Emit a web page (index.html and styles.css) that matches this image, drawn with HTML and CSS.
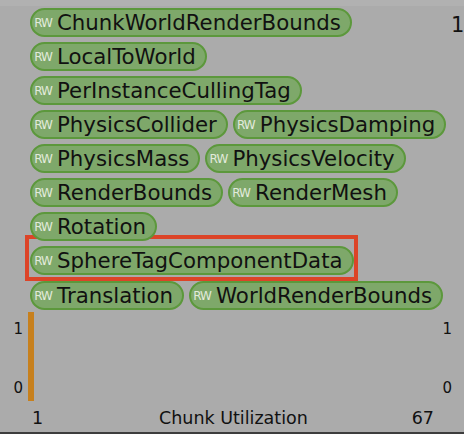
FILE: index.html
```html
<!DOCTYPE html>
<html lang="en">
<head>
  <meta charset="UTF-8" />
  <title>Chunk Components</title>
  <link rel="stylesheet" href="styles.css">
</head>
<body>

  <div class="top-strip"></div>

  <!-- Component list -->
  <div class="archetype">
    <div class="components">
      <div class="row">
        <span class="comp"><span class="rw">RW</span>ChunkWorldRenderBounds</span>
      </div>
      <div class="row">
        <span class="comp"><span class="rw">RW</span>LocalToWorld</span>
      </div>
      <div class="row">
        <span class="comp"><span class="rw">RW</span>PerInstanceCullingTag</span>
      </div>
      <div class="row">
        <span class="comp"><span class="rw">RW</span>PhysicsCollider</span>
        <span class="comp"><span class="rw">RW</span>PhysicsDamping</span>
      </div>
      <div class="row">
        <span class="comp"><span class="rw">RW</span>PhysicsMass</span>
        <span class="comp"><span class="rw">RW</span>PhysicsVelocity</span>
      </div>
      <div class="row">
        <span class="comp"><span class="rw">RW</span>RenderBounds</span>
        <span class="comp"><span class="rw">RW</span>RenderMesh</span>
      </div>
      <div class="row">
        <span class="comp"><span class="rw">RW</span>Rotation</span>
      </div>
      <div class="row selected">
        <span class="comp"><span class="rw">RW</span>SphereTagComponentData</span>
      </div>
      <div class="row">
        <span class="comp"><span class="rw">RW</span>Translation</span>
        <span class="comp"><span class="rw">RW</span>WorldRenderBounds</span>
      </div>
    </div>
    <div class="count">1</div>
  </div>

  <!-- Chunk utilization histogram -->
  <div class="chart">
    <div class="axis-y">
      <span>1</span>
      <span>0</span>
    </div>
    <div class="plot">
      <div class="bar" style="height: 100%"></div>
    </div>
    <div class="axis-y">
      <span>1</span>
      <span>0</span>
    </div>
  </div>
  <div class="axis-x">
    <span>1</span>
    <span class="axis-title">Chunk Utilization</span>
    <span>67</span>
  </div>

  <div class="bottom-strip"></div>

</body>
</html>
```

FILE: styles.css
```css
* {
  box-sizing: border-box;
  margin: 0;
  padding: 0;
}

body {
  position: relative;
  width: 464px;
  height: 434px;
  overflow: hidden;
  background: #ababab;
  color: #111;
  font-family: "DejaVu Sans", Verdana, sans-serif;
}

.top-strip {
  height: 6px;
  background: #b1b1b1;
}

.archetype {
  display: flex;
  justify-content: space-between;
  padding: 2px 0 0 25px;
}

.components {
  display: flex;
  flex-direction: column;
  align-items: flex-start;
  gap: 5px;
}

.row {
  display: flex;
  gap: 5px;
  padding-left: 5px;
}

/* highlighted archetype component */
.row.selected {
  border: 4px solid #dc4428;
  padding: 7px 0 2px 1px;
  margin: -11px 0 -5px;
}

.comp {
  position: relative;
  display: flex;
  align-items: center;
  height: 29px;
  padding: 0 9px 0 1px;
  background: #7ea86a;
  border: 2px solid #5c983c;
  border-radius: 15px;
  font-size: 21.3px;
  line-height: 1;
  white-space: nowrap;
}

.rw {
  width: 20px;
  margin-right: 4px;
  font-size: 12px;
  color: #e2eadc;
  letter-spacing: -1px;
  text-align: center;
}

.count {
  flex-shrink: 0;
  width: 13px;
  font-size: 21px;
  line-height: 1;
  padding-top: 7px;
}

.chart {
  display: flex;
  height: 89px;
  margin-top: 2px;
  font-size: 15px;
}

.axis-y {
  width: 28px;
  display: flex;
  flex-direction: column;
  justify-content: space-between;
  align-items: flex-end;
  padding: 10px 5px 5px 0;
  line-height: 1;
}

.axis-y:last-child {
  width: 30px;
  padding-right: 12px;
}

.plot {
  flex: 1;
  display: flex;
  align-items: flex-end;
}

.bar {
  width: 6px;
  background: #c7801d;
}

.axis-x {
  display: flex;
  justify-content: space-between;
  padding: 9px 30px 0 32px;
  font-size: 17.5px;
  line-height: 1;
}

.axis-title {
  margin-left: 12px;
}

.bottom-strip {
  position: absolute;
  left: 0;
  right: 0;
  bottom: 0;
  height: 2px;
  background: #3d3d3d;
}
```
